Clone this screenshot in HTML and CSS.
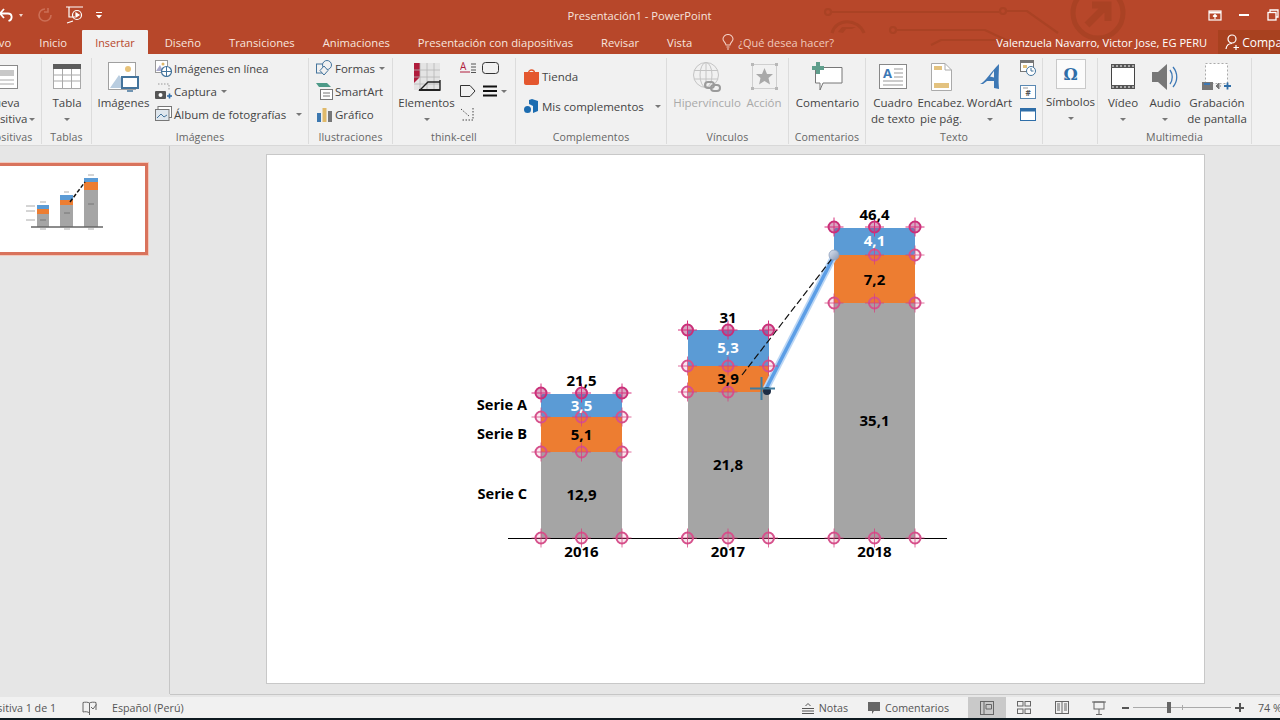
FILE: index.html
```html
<!DOCTYPE html>
<html lang="es">
<head>
<meta charset="utf-8">
<title>Presentación1 - PowerPoint</title>
<link rel="stylesheet" href="styles.css">
</head>
<body>
<div class="app">
  <header class="titlebar">
    <svg class="circuit" viewBox="810 0 380 54" width="380" height="54" fill="none" stroke="#aa4224" stroke-width="2.2">
      <circle cx="828" cy="12" r="3"/><path d="M831 12H999"/><circle cx="1003" cy="11" r="3"/><path d="M1007 11H1027L1058 33"/>
      <circle cx="893" cy="30" r="3"/><path d="M896 30H985L1006 40"/><path d="M931 45L941 40H1010"/>
      <path d="M832 33C836 18 858 18 864 33" stroke-width="3"/><path d="M838 32L842 27H856L852 29H846L843 33Z" fill="#aa4224" stroke="none"/>
      <circle cx="1098" cy="13" r="25" stroke-width="5"/><path d="M1087 25L1106 6M1092 5H1108V21" stroke-width="7"/>
    </svg>
    <div class="title-row">
      <div class="quick">
        <svg class="q-undo" viewBox="0 0 16 16" width="16" height="16" fill="none" stroke="#fff" stroke-width="1.8"><path d="M6 2L2 6.500L6 11M2 6.500H10C14.500 6.500 15 12.500 10.500 14"/></svg>
        <span class="q-caret"></span>
        <svg class="q-redo" viewBox="0 0 16 16" width="16" height="16" fill="none" stroke="#cc6f56" stroke-width="1.6"><path d="M8 2A6 6 0 1 0 14 8M11 1V5H7"/></svg>
        <svg class="q-show" viewBox="0 0 18 18" width="18" height="18" fill="none" stroke="#fff" stroke-width="1.2"><path d="M0 1H17M3 1V11H9M7 15L1 17"/><circle cx="11" cy="9" r="4.500"/><path d="M10 7L13 9L10 11Z" fill="#fff"/></svg>
        <svg class="q-more" viewBox="0 0 6 7" width="6" height="7"><path d="M0 0.500H6" stroke="#fff"/><path d="M0 3H6L3 6.500Z" fill="#fff"/></svg>
      </div>
      <div class="doc-title">Presentación1 - PowerPoint</div>
      <div class="win-controls">
        <svg viewBox="0 0 14 11" width="14" height="11" fill="none" stroke="#fff" stroke-width="1.2"><rect x="1" y="1" width="12" height="9"/><path d="M1 2.500H13" stroke-width="2"/><path d="M7 9V5M5 6.500L7 4.500L9 6.500"/></svg>
        <span class="win-min"></span>
        <svg viewBox="0 0 12 12" width="12" height="12" fill="none" stroke="#fff" stroke-width="1.3"><path d="M3 3V1H11V8H9"/><rect x="1" y="3.500" width="8" height="7.500"/></svg>
      </div>
    </div>
    <nav class="tabs">
      <span class="tab tab-first">Archivo</span>
      <span class="tab">Inicio</span>
      <span class="tab active">Insertar</span>
      <span class="tab">Diseño</span>
      <span class="tab">Transiciones</span>
      <span class="tab">Animaciones</span>
      <span class="tab">Presentación con diapositivas</span>
      <span class="tab">Revisar</span>
      <span class="tab">Vista</span>
      <span class="tell">
        <svg viewBox="0 0 12 16" width="12" height="16" fill="none" stroke="#f3cfc4" stroke-width="1.1"><path d="M4 11C3.500 8 1 7.500 1 5A5 4.500 0 0 1 11 5C11 7.500 8.500 8 8 11ZM4.500 13H7.500M5 15H7"/></svg>
        ¿Qué desea hacer?
      </span>
      <span class="user">Valenzuela Navarro, Victor Jose, EG PERU</span>
      <span class="share">
        <svg viewBox="0 0 16 16" width="16" height="16" fill="none" stroke="#fff" stroke-width="1.2"><circle cx="7" cy="5" r="4"/><path d="M1 15C1.500 11 4 9.500 7 9.500M11 11V16M8.500 13.500H14"/></svg>
        Compartir
      </span>
    </nav>
  </header>

  <div class="ribbon">
    <section class="group g-diap">
      <div class="group-body">
        <div class="big w-diap">
          <div class="big-icon"><svg viewBox="0 0 30 24" width="30" height="24" fill="#fff" stroke="#8a8a8a"><rect x="0.500" y="0.500" width="29" height="23"/><rect x="4" y="5" width="22" height="6" fill="#c8c8c8" stroke="none"/><path d="M4 15H26M4 19H26" stroke="#a8a8a8"/></svg></div>
          <div class="big-text">Nueva<br>diapositiva<i class="caret inline"></i></div>
        </div>
      </div>
      <div class="group-label">Diapositivas</div>
    </section>

    <section class="group g-tablas">
      <div class="group-body">
        <div class="big w-tabla">
          <div class="big-icon"><svg viewBox="0 0 28 25" width="28" height="25" fill="#fff" stroke="#a9a9a9"><rect x="0.500" y="0.500" width="27" height="24"/><rect x="0" y="0" width="28" height="5" fill="#5c5c5c" stroke="none"/><path d="M0 11H28M0 17H28M9.500 5V25M18.500 5V25"/></svg></div>
          <div class="big-text">Tabla<br><i class="caret"></i></div>
        </div>
      </div>
      <div class="group-label">Tablas</div>
    </section>

    <section class="group g-img">
      <div class="group-body">
        <div class="big w-img">
          <div class="big-icon"><svg viewBox="0 0 31 30" width="31" height="30"><rect x="0.500" y="0.500" width="27" height="27" fill="#fff" stroke="#a0a0a0"/><circle cx="20" cy="7" r="3" fill="#e8c37a"/><path d="M2 26L11 13L20 26Z" fill="#b9cde0"/><rect x="14" y="15" width="16" height="11" fill="#fff" stroke="#44749c" stroke-width="2"/><path d="M19 29H25" stroke="#44749c" stroke-width="1.500"/></svg></div>
          <div class="big-text">Imágenes</div>
        </div>
        <div class="smalls s-img">
          <div class="small"><svg viewBox="0 0 17 17" width="17" height="17"><rect x="0.500" y="0.500" width="12" height="12" fill="#fff" stroke="#999"/><circle cx="8" cy="4" r="1.500" fill="#e0b96a"/><path d="M1 11L5 5L8 11Z" fill="#aac"/><circle cx="11.500" cy="11.500" r="5" fill="#fff" stroke="#44749c" stroke-width="1.200"/><path d="M6.500 11.500H16.500M11.500 6.500V16.500" stroke="#44749c"/></svg><span class="shrink">Imágenes en línea</span></div>
          <div class="small"><svg viewBox="0 0 17 17" width="17" height="17"><path d="M3 1H14V7" fill="none" stroke="#999" stroke-dasharray="1.500 1.500"/><rect x="0" y="8" width="11" height="8" rx="1" fill="#555"/><circle cx="5.500" cy="12" r="2" fill="#fff"/><path d="M12 13H17M14.500 10.500V15.500" stroke="#2c6aa6" stroke-width="1.600"/></svg>Captura<i class="caret inline"></i></div>
          <div class="small"><svg viewBox="0 0 17 17" width="17" height="17" fill="#fff" stroke="#777"><rect x="3" y="0.500" width="13.500" height="11"/><rect x="0.500" y="3.500" width="13.500" height="11" fill="#dfe7ee"/><path d="M2 12L6 8L9 11L12 9" fill="none" stroke="#44749c"/></svg>Álbum de fotografías<i class="caret wide"></i></div>
        </div>
      </div>
      <div class="group-label">Imágenes</div>
    </section>

    <section class="group g-ilus">
      <div class="group-body">
        <div class="smalls s-ilus">
          <div class="small"><svg viewBox="0 0 17 17" width="17" height="17" fill="none" stroke="#44749c"><rect x="0.500" y="4" width="9" height="9"/><circle cx="11" cy="5" r="4.500" fill="#f1f1f1"/><path d="M8 6L12 10.500L8 15L4 10.500Z" fill="#f1f1f1"/></svg>Formas<i class="caret inline"></i></div>
          <div class="small"><svg viewBox="0 0 17 17" width="17" height="17"><path d="M0 0H11L15 4H3Z" fill="#4d9a88"/><rect x="4.500" y="6.500" width="12" height="10" fill="#fff" stroke="#777"/><path d="M7 10H14M7 13H14" stroke="#777"/></svg>SmartArt</div>
          <div class="small"><svg viewBox="0 0 17 17" width="17" height="17"><rect x="1" y="7" width="4" height="9" fill="#3c78b0"/><rect x="6.500" y="2" width="4" height="14" fill="#e0b96a"/><rect x="12" y="5" width="4" height="11" fill="#777"/></svg>Gráfico</div>
        </div>
      </div>
      <div class="group-label">Ilustraciones</div>
    </section>

    <section class="group g-think">
      <div class="group-body">
        <div class="big w-elem">
          <div class="big-icon"><svg viewBox="0 0 28 28" width="28" height="28"><rect x="1" y="0" width="26" height="27" fill="#e4e4e4"/><path d="M1 0H7V14L1 20Z" fill="#b01c3c"/><path d="M7 0V27M14 0V27M21 0V27M1 7H27M1 14H27M1 21H27" stroke="#b5b5b5" stroke-width="0.800"/><path d="M27 17V27H7L15 19H27" fill="none" stroke="#222" stroke-width="1.400"/><path d="M6 27H27" stroke="#222" stroke-width="2"/></svg></div>
          <div class="big-text">Elementos<br><i class="caret"></i></div>
        </div>
        <div class="think-tools">
          <svg viewBox="0 0 43 14" width="43" height="14" fill="none"><text x="0" y="9" class="svg-a">A</text><path d="M0 11H10" stroke="#b01c3c"/><path d="M11 3H16M11 6H16M11 9H16M11 11.500H16" stroke="#555"/><rect x="22.500" y="1.500" width="16" height="11" rx="3" stroke="#333"/></svg>
          <svg viewBox="0 0 50 14" width="50" height="14" fill="none"><path d="M0.500 1.500H10L15 7L10 12.500H0.500Z" stroke="#333"/><path d="M23 2.500H37M23 7H37M23 11.500H37" stroke="#111" stroke-width="2.200"/><path d="M41 6H47L44 9Z" fill="#777"/></svg>
          <svg viewBox="0 0 43 14" width="43" height="14"><path d="M1 2L9 9M13 1V13H2" fill="none" stroke="#444" stroke-dasharray="1.500 1.500"/></svg>
        </div>
      </div>
      <div class="group-label">think-cell</div>
    </section>

    <section class="group g-comp">
      <div class="group-body comp-body">
        <div class="small tall"><svg viewBox="0 0 15 17" width="15" height="17"><path d="M0 4H15V15C15 16 14 17 13 17H2C1 17 0 16 0 15Z" fill="#e4572e"/><path d="M4.500 5C4.500 1 10.500 1 10.500 5" fill="none" stroke="#e4572e" stroke-width="1.300"/></svg>Tienda</div>
        <div class="small tall"><svg viewBox="0 0 15 15" width="15" height="15" fill="#1c6cb0"><path d="M5 1L8 0L14 2V12L9 14V7L5 5Z"/><circle cx="3.500" cy="10.500" r="3.500"/></svg>Mis complementos<i class="caret wide"></i></div>
      </div>
      <div class="group-label">Complementos</div>
    </section>

    <section class="group g-vinc">
      <div class="group-body">
        <div class="big w-hip disabled">
          <div class="big-icon"><svg viewBox="0 0 30 30" width="30" height="30" fill="none" stroke="#c4c4c4"><circle cx="14" cy="13" r="12.500"/><ellipse cx="14" cy="13" rx="6" ry="12.500"/><path d="M14 0V26M2 8.500H26M2 17H26"/><rect x="13" y="20" width="9" height="6" rx="3" stroke="#9b9b9b" stroke-width="2"/><rect x="19" y="23" width="9" height="6" rx="3" stroke="#9b9b9b" stroke-width="2"/></svg></div>
          <div class="big-text">Hipervínculo</div>
        </div>
        <div class="big w-acc disabled">
          <div class="big-icon"><svg viewBox="0 0 27 27" width="27" height="27"><rect x="1.500" y="1.500" width="24" height="24" fill="none" stroke="#cfcfcf"/><path d="M13.500 5L16 11H22L17.500 15L19 21.500L13.500 18L8 21.500L9.500 15L5 11H11Z" fill="#a9a9a9"/><path d="M0 0H3V3H0ZM24 0H27V3H24ZM0 24H3V27H0ZM24 24H27V27H24Z" fill="#b8b8b8"/></svg></div>
          <div class="big-text">Acción</div>
        </div>
      </div>
      <div class="group-label">Vínculos</div>
    </section>

    <section class="group g-coms">
      <div class="group-body">
        <div class="big w-com">
          <div class="big-icon"><svg viewBox="0 0 31 30" width="31" height="30"><path d="M3.500 5.500H30V21H11L8 28V21H3.500Z" fill="#fff" stroke="#777"/><path d="M4 0H8V4H12V8H8V12H4V8H0V4H4Z" fill="#5f9e8c"/></svg></div>
          <div class="big-text">Comentario</div>
        </div>
      </div>
      <div class="group-label">Comentarios</div>
    </section>

    <section class="group g-texto">
      <div class="group-body">
        <div class="big w-cuadro">
          <div class="big-icon"><svg viewBox="0 0 28 25" width="28" height="25"><rect x="0.500" y="0.500" width="27" height="24" fill="#fff" stroke="#888"/><text x="4" y="14" class="svg-atext">A</text><path d="M15 5H24M15 9H24M15 13H24M4 17H24M4 21H24" stroke="#999"/></svg></div>
          <div class="big-text">Cuadro<br>de texto</div>
        </div>
        <div class="big w-enc">
          <div class="big-icon"><svg viewBox="0 0 21 28" width="21" height="28"><path d="M0.500 0.500H14L20.500 7V27.500H0.500Z" fill="#fff" stroke="#aaa"/><path d="M14 0.500V7H20.500" fill="none" stroke="#aaa"/><rect x="3" y="3" width="8" height="4" fill="#e3c27f"/><rect x="3" y="20" width="15" height="5" fill="#e3c27f"/></svg></div>
          <div class="big-text">Encabez.<br>pie pág.</div>
        </div>
        <div class="big w-word">
          <div class="big-icon"><svg viewBox="0 0 22 26" width="22" height="26"><path d="M1 20C6 18 12 8 20 0C20 8 19 16 20 25L15 24L15 17H8L4 20Z" fill="#3d78b5"/><path d="M11 12.500L15 7V13.500Z" fill="#f1f1f1"/></svg></div>
          <div class="big-text">WordArt<br><i class="caret"></i></div>
        </div>
        <div class="text-tools">
          <svg viewBox="0 0 16 16" width="16" height="16"><rect x="0.500" y="0.500" width="13" height="11" fill="#fff" stroke="#777"/><rect x="0" y="0" width="14" height="3" fill="#777"/><rect x="3" y="5" width="4" height="3" fill="#e3c27f"/><circle cx="11" cy="11" r="4.500" fill="#fff" stroke="#44749c"/><path d="M11 8V11H13.500" stroke="#44749c" fill="none"/></svg>
          <svg viewBox="0 0 16 14" width="16" height="14"><rect x="0.500" y="0.500" width="15" height="13" fill="#fff" stroke="#5b89b3"/><path d="M3 3H8" stroke="#999"/><text x="8" y="11" class="svg-hash">#</text></svg>
          <svg viewBox="0 0 16 13" width="16" height="13"><rect x="0.500" y="0.500" width="15" height="12" fill="#fff" stroke="#2f6ea8"/><rect x="0" y="0" width="16" height="3.500" fill="#2f6ea8"/></svg>
        </div>
      </div>
      <div class="group-label">Texto</div>
    </section>

    <section class="group g-sim">
      <div class="group-body">
        <div class="big w-sim">
          <div class="omega">Ω</div>
          <div class="big-text">Símbolos<br><i class="caret"></i></div>
        </div>
      </div>
      <div class="group-label">&nbsp;</div>
    </section>

    <section class="group g-multi">
      <div class="group-body">
        <div class="big w-vid">
          <div class="big-icon"><svg viewBox="0 0 24 25" width="24" height="25"><rect x="0.500" y="0.500" width="23" height="24" fill="#fff" stroke="#444"/><rect x="0" y="0" width="24" height="4" fill="#555"/><rect x="0" y="21" width="24" height="4" fill="#555"/><path d="M1 2H23M1 23H23" stroke="#fff" stroke-dasharray="2 2"/></svg></div>
          <div class="big-text">Vídeo<br><i class="caret"></i></div>
        </div>
        <div class="big w-aud">
          <div class="big-icon"><svg viewBox="0 0 27 26" width="27" height="26"><path d="M0 8H6L15 0V26L6 18H0Z" fill="#777"/><path d="M18 6C21 10 21 16 18 20M21 3C26 9 26 17 21 23" fill="none" stroke="#3d78b5" stroke-width="1.300"/></svg></div>
          <div class="big-text">Audio<br><i class="caret"></i></div>
        </div>
        <div class="big w-grab">
          <div class="big-icon"><svg viewBox="0 0 30 28" width="30" height="28"><rect x="3.500" y="0.500" width="22" height="20" fill="#fff" stroke="#aaa" stroke-dasharray="2 2"/><rect x="0" y="19" width="11" height="8" fill="#777"/><path d="M2 21H8" stroke="#3d78b5" stroke-width="2"/><path d="M14 23L17 20V26ZM18 23H19" fill="#777" stroke="#777"/><path d="M22 23H29M25.500 19.500V26.500" stroke="#2f6ea8" stroke-width="1.800"/></svg></div>
          <div class="big-text">Grabación<br>de pantalla</div>
        </div>
      </div>
      <div class="group-label">Multimedia</div>
    </section>
  </div>

  <main class="workspace">
    <aside class="slides-pane">
      <div class="thumb">
        <svg viewBox="0 0 150 85" width="150" height="85">
          <rect x="37" y="39" width="12" height="4" fill="#5b9bd5"/><rect x="37" y="43" width="12" height="5" fill="#ed7d31"/><rect x="37" y="48" width="12" height="13" fill="#a5a5a5"/>
          <rect x="60" y="29" width="13" height="5" fill="#5b9bd5"/><rect x="60" y="34" width="13" height="5" fill="#ed7d31"/><rect x="60" y="39" width="13" height="22" fill="#a5a5a5"/>
          <rect x="84" y="12" width="14" height="4" fill="#5b9bd5"/><rect x="84" y="16" width="14" height="8" fill="#ed7d31"/><rect x="84" y="24" width="14" height="37" fill="#a5a5a5"/>
          <path d="M31 61H103" stroke="#666" stroke-width="1.500"/>
          <path d="M70 36L85 16" stroke="#111" stroke-width="1.500" stroke-dasharray="4 2"/>
          <path d="M26 40H35M26 45H35M26 54H35M40 36H46M64 26H69M88 9H94M40 63H46M64 63H70M88 63H94" stroke="#aaa" stroke-width="1"/>
          <path d="M40 54H46M64 47H70M88 38H94" stroke="#777" stroke-width="1"/>
        </svg>
      </div>
    </aside>
    <div class="stage">
      <div class="slide">
        <svg class="chart" viewBox="267 155 937 528" width="937" height="528">
          <defs>
            <g id="h">
              <circle r="5.500" fill="#d6417f" fill-opacity="0.12" stroke="#d6518c" stroke-width="2"/>
              <path d="M-9.500 0H9.500M0 -9.500V9.500" stroke="#d6417f" stroke-width="1" stroke-opacity="0.75"/>
            </g>
            <g id="ht">
              <circle r="5.500" fill="#a83a78" fill-opacity="0.45" stroke="#c92f78" stroke-width="2"/>
              <path d="M-9.500 0H9.500M0 -9.500V9.500" stroke="#d6307c" stroke-width="1"/>
            </g>
            <linearGradient id="ballg" x1="0" y1="0" x2="1" y2="1"><stop offset="0" stop-color="#dfe6f2"/><stop offset="1" stop-color="#8496b4"/></linearGradient>
          </defs>

          <rect class="c-a" x="541" y="394" width="81" height="23" rx="2"/>
          <rect class="c-b" x="541" y="417" width="81" height="35"/>
          <rect class="c-c" x="541" y="452" width="81" height="86"/>
          <rect class="c-a" x="688" y="330" width="81" height="36"/>
          <rect class="c-b" x="688" y="366" width="81" height="26"/>
          <rect class="c-c" x="688" y="392" width="81" height="146"/>
          <rect class="c-a" x="834" y="228" width="81" height="27" rx="2"/>
          <rect class="c-b" x="834" y="255" width="81" height="48"/>
          <rect class="c-c" x="834" y="303" width="81" height="235"/>

          <path d="M508 538.500H947" stroke="#000" stroke-width="1.200"/>

          <path d="M766 389L834 256" stroke="#bcd7f5" stroke-width="7"/>
          <path d="M766 389L834 256" stroke="#5c9ee6" stroke-width="3.500"/>
          <path d="M742 375L834 256" stroke="#111" stroke-width="1.200" stroke-dasharray="7 3"/>

          <use href="#ht" x="541" y="393"/><use href="#ht" x="581.500" y="393"/><use href="#ht" x="622" y="393"/>
          <use href="#h" x="541" y="417"/><use href="#h" x="581.500" y="417"/><use href="#h" x="622" y="417"/>
          <use href="#h" x="541" y="452"/><use href="#h" x="581.500" y="452"/><use href="#h" x="622" y="452"/>
          <use href="#h" x="541" y="538"/><use href="#h" x="581.500" y="538"/><use href="#h" x="622" y="538"/>
          <use href="#ht" x="687.500" y="330"/><use href="#ht" x="728" y="330"/><use href="#ht" x="768.500" y="330"/>
          <use href="#h" x="687.500" y="366"/><use href="#h" x="728" y="366"/><use href="#h" x="768.500" y="366"/>
          <use href="#h" x="687.500" y="392"/><use href="#h" x="728" y="392"/>
          <use href="#h" x="687.500" y="538"/><use href="#h" x="728" y="538"/><use href="#h" x="768.500" y="538"/>
          <use href="#ht" x="834" y="227"/><use href="#ht" x="874.500" y="227"/><use href="#ht" x="915" y="227"/>
          <use href="#h" x="874.500" y="255"/><use href="#h" x="915" y="255"/>
          <use href="#h" x="834" y="303"/><use href="#h" x="874.500" y="303"/><use href="#h" x="915" y="303"/>
          <use href="#h" x="834" y="538"/><use href="#h" x="874.500" y="538"/><use href="#h" x="915" y="538"/>

          <circle cx="834" cy="255" r="5" fill="url(#ballg)" stroke="#8ea0bb" stroke-width="0.800"/>
          <circle cx="767" cy="391" r="4" fill="#1d2d45"/>
          <path d="M750 388.500H775M761.500 377V400" stroke="#3f7c9f" stroke-width="2"/>

          <g class="lbl">
            <text x="581.500" y="386">21,5</text>
            <text x="581.500" y="411" class="w">3,5</text>
            <text x="581.500" y="440">5,1</text>
            <text x="581.500" y="500">12,9</text>
            <text x="581.500" y="557">2016</text>
            <text x="728" y="323">31</text>
            <text x="728" y="353" class="w">5,3</text>
            <text x="728" y="384">3,9</text>
            <text x="728" y="470">21,8</text>
            <text x="728" y="557">2017</text>
            <text x="874.500" y="220">46,4</text>
            <text x="874.500" y="246" class="w">4,1</text>
            <text x="874.500" y="285">7,2</text>
            <text x="874.500" y="426">35,1</text>
            <text x="874.500" y="557">2018</text>
          </g>
          <g class="lbl end">
            <text x="527" y="410">Serie A</text>
            <text x="527" y="439">Serie B</text>
            <text x="527" y="499">Serie C</text>
          </g>
        </svg>
      </div>
    </div>
  </main>

  <footer class="status">
    <div class="st-left">
      <span class="st-slide">Diapositiva 1 de 1</span>
      <svg class="st-book" viewBox="0 0 15 14" width="15" height="14" fill="none" stroke="#666"><path d="M7.500 2C6 1 3 1 1 1.500V11C3 10.500 6 10.500 7.500 12V2ZM7.500 12V14"/><path d="M7.500 2C9 1 12 1 14 1.500V9M9 6L11 8L14.500 3.500" stroke="#666"/></svg>
      <span class="st-lang">Español (Perú)</span>
    </div>
    <div class="st-right">
      <span class="st-item"><svg viewBox="0 0 12 12" width="12" height="12" fill="none" stroke="#555"><path d="M0 6.500H12M0 9H12M0 11.500H12"/><path d="M3.500 4L6 1.500L8.500 4"/></svg>Notas</span>
      <span class="st-item st-coms"><svg viewBox="0 0 12 12" width="12" height="12"><path d="M0 0H12V9H6L4 12V9H0Z" fill="#666"/></svg>Comentarios</span>
      <span class="view on"><svg viewBox="0 0 14 14" width="14" height="14" fill="none" stroke="#666"><rect x="0.500" y="0.500" width="13" height="13"/><path d="M4 1V13M6 3.500H11.500V8H6Z"/></svg></span>
      <span class="view"><svg viewBox="0 0 14 13" width="14" height="13" fill="none" stroke="#666"><rect x="0.500" y="0.500" width="5.500" height="4.500"/><rect x="8" y="0.500" width="5.500" height="4.500"/><rect x="0.500" y="8" width="5.500" height="4.500"/><rect x="8" y="8" width="5.500" height="4.500"/></svg></span>
      <span class="view"><svg viewBox="0 0 14 13" width="14" height="13" fill="none" stroke="#666"><rect x="0.500" y="0.500" width="13" height="12"/><path d="M7 1V12M2 3H5M2 5H5M2 7H5M2 9H5M9 3H12M9 5H12M9 7H12M9 9H12"/></svg></span>
      <span class="view"><svg viewBox="0 0 14 14" width="14" height="14" fill="none" stroke="#666"><path d="M0 1H14"/><rect x="2" y="1" width="10" height="7"/><path d="M7 8V13M4 13.500H10"/></svg></span>
      <div class="zoom">
        <span class="z-minus"></span>
        <span class="z-track"><span class="z-tick"></span><span class="z-thumb"></span></span>
        <span class="z-plus"></span>
      </div>
      <span class="z-value">74 %</span>
    </div>
  </footer>
</div>
</body>
</html>
```

FILE: styles.css
```css
* { box-sizing: border-box; }
html, body { margin: 0; padding: 0; height: 100%; overflow: hidden; }
body { font-family: "Open Sans", "Noto Sans", "Liberation Sans", sans-serif; font-size: 11.5px; color: #444; background: #e6e6e6; }
.app { width: 1280px; height: 720px; display: flex; flex-direction: column; overflow: hidden; }

/* title bar */
.titlebar { position: relative; height: 54px; flex: none; background: #b7472a; color: #fff; display: flex; flex-direction: column; }
.circuit { position: absolute; left: 810px; top: 0; }
.title-row { position: relative; height: 30px; flex: none; display: flex; align-items: center; }
.quick { width: 360px; flex: none; display: flex; align-items: center; margin-left: -3px; padding-left: 1px; }
.q-caret { width: 0; height: 0; margin-left: 5px; border: 2.5px solid transparent; border-top: 3px solid #f0d5cc; border-bottom: 0; }
.q-redo { margin-left: 14px; }
.q-show { margin-left: 13px; }
.q-more { margin-left: 12px; }
.doc-title { width: 565px; flex: none; text-align: center; font-size: 11.2px; color: #f6e4de; }
.win-controls { margin-left: 286px; display: flex; align-items: center; }
.win-min { width: 10px; height: 2px; background: #fff; margin: 0 18px 0 17px; }
.tabs { position: relative; height: 24px; flex: none; display: flex; align-items: stretch; line-height: 25px; font-size: 11.25px; color: #f7e5df; white-space: nowrap; }
.tab { padding: 0 14px; }
.tab-first { margin-left: -42px; }
.tab.active { background: #f1f1f1; color: #b7472a; border-radius: 1px 1px 0 0; font-size: 10.8px; padding: 0 13px; margin: 0 3px 0 1px; }
.tell { margin-left: 16px; display: flex; align-items: center; gap: 4px; color: #f0c9bc; width: 274px; flex: none; font-size: 11px; }
.user { width: 222px; flex: none; font-size: 11.1px; color: #fff; }
.share { flex: none; padding-left: 7px; width: 90px; display: flex; align-items: center; gap: 1px; background: #a8411f; font-size: 12px; color: #fff; }

/* ribbon */
.ribbon { height: 92px; flex: none; background: #f1f1f1; border-bottom: 1px solid #d8d8d8; display: flex; padding-top: 4px; font-size: 11.5px; color: #444; }
.group { height: 86px; flex: none; display: flex; flex-direction: column; border-right: 1px solid #dcdcdc; }
.group-body { height: 72px; flex: none; display: flex; }
.group-label { height: 14px; line-height: 14px; text-align: center; font-size: 10.6px; color: #666; letter-spacing: 0.1px; white-space: nowrap; }
.g-diap { width: 79px; margin-left: -37px; }
.g-tablas { width: 50px; }
.g-img { width: 217px; }
.g-ilus { width: 84px; }
.g-think { width: 123px; }
.g-comp { width: 151px; }
.g-vinc { width: 122px; }
.g-coms { width: 77px; }
.g-texto { width: 177px; }
.g-sim { width: 55px; }
.g-multi { width: 154px; }

.big { flex: none; display: flex; flex-direction: column; align-items: center; text-align: center; white-space: nowrap; }
.big-icon { height: 37px; flex: none; display: flex; align-items: center; justify-content: center; }
.big-text { line-height: 15.5px; }
.disabled { color: #a9a9a9; }
.caret { display: inline-block; width: 0; height: 0; border: 3px solid transparent; border-top: 3px solid #777; border-bottom: 0; vertical-align: middle; }
.caret.inline { margin-left: 2px; }
.caret.wide { margin-left: 8px; }

.w-diap { width: 79px; }
.w-tabla { width: 50px; }
.w-img { width: 63px; }
.w-elem { width: 67px; }
.w-hip { width: 80px; }
.w-acc { width: 34px; }
.w-com { width: 77px; }
.w-cuadro { width: 54px; }
.w-enc { width: 42px; }
.w-word { width: 55px; }
.w-sim { width: 55px; }
.w-vid { width: 50px; }
.w-aud { width: 34px; }
.w-grab { width: 70px; }

.smalls { display: flex; flex-direction: column; margin-top: -1px; }
.small { height: 23px; display: flex; align-items: center; gap: 2px; white-space: nowrap; }
.shrink { font-size: 11.2px; }
.s-ilus { padding-left: 7px; }
.tall { height: 30px; gap: 3px; }
.comp-body { flex-direction: column; padding: 3px 0 0 8px; }

.think-tools { display: flex; flex-direction: column; gap: 9px; padding: 3px 0 0 0; }
.text-tools { display: flex; flex-direction: column; align-items: center; gap: 9px; padding-top: 2px; width: 22px; }
.svg-a { font: 10px "Open Sans", sans-serif; fill: #b01c3c; }
.svg-atext { font: bold 13px "Open Sans", sans-serif; fill: #3d78b5; }
.svg-hash { font: bold 8px "Open Sans", sans-serif; fill: #555; text-anchor: middle; }
.omega { width: 30px; height: 30px; margin: 1px 0 5px; flex: none; display: flex; align-items: center; justify-content: center; background: #fbfbfb; border: 1px solid #c9c9c9; font: bold 16px "DejaVu Serif", serif; color: #2f6ea8; }

/* workspace */
.workspace { flex: 1; min-height: 0; display: flex; background: #e6e6e6; }
.slides-pane { width: 170px; flex: none; border-right: 1px solid #c6c6c6; padding-top: 17px; margin-bottom: 3px; }
.thumb { width: 148px; height: 92px; background: #fff; border: 3px solid #d9735c; border-left: 0; box-shadow: 0 0 0 1px #f1c9bd; overflow: hidden; }
.thumb svg { display: block; }
.stage { flex: 1; padding: 8px 0 0 96px; border-bottom: 1px solid #c6c6c6; margin-bottom: 2px; }
.slide { width: 939px; height: 530px; background: #fff; border: 1px solid #c8c8c8; }
.chart { display: block; }
.c-a { fill: #5b9bd5; }
.c-b { fill: #ed7d31; }
.c-c { fill: #a5a5a5; }
.lbl text { font: bold 15px "Open Sans", sans-serif; fill: #000; text-anchor: middle; }
.lbl text.w { fill: #fff; }
.lbl.end text { text-anchor: end; font-size: 14.6px; }

/* status bar */
.status { height: 23px; flex: none; background: #f1f1f1; border-bottom: 2px solid #0e1a20; display: flex; justify-content: space-between; font-size: 10.7px; color: #555; white-space: nowrap; }
.st-left { display: flex; align-items: center; margin-left: -32px; }
.st-slide { width: 114px; flex: none; }
.st-lang { margin-left: 15px; }
.st-right { display: flex; align-items: center; height: 100%; }
.st-item { display: flex; align-items: center; gap: 5px; }
.st-coms { margin: 0 19px 0 20px; }
.view { width: 37.500px; height: 100%; display: flex; align-items: center; justify-content: center; }
.view.on { background: #c9c9c9; }
.zoom { display: flex; align-items: center; margin-left: 4px; height: 100%; }
.z-minus { width: 7px; height: 2px; background: #555; }
.z-track { position: relative; width: 98px; height: 1px; background: #aaa; margin: 0 4px; }
.z-tick { position: absolute; left: 49px; top: -2px; width: 1px; height: 5px; background: #aaa; }
.z-thumb { position: absolute; left: 34px; top: -5px; width: 4px; height: 11px; background: #666; }
.z-plus { width: 9px; height: 9px; background: linear-gradient(#555,#555) center/9px 2px no-repeat, linear-gradient(#555,#555) center/2px 9px no-repeat; }
.z-value { margin-left: 14px; width: 22px; }
```
